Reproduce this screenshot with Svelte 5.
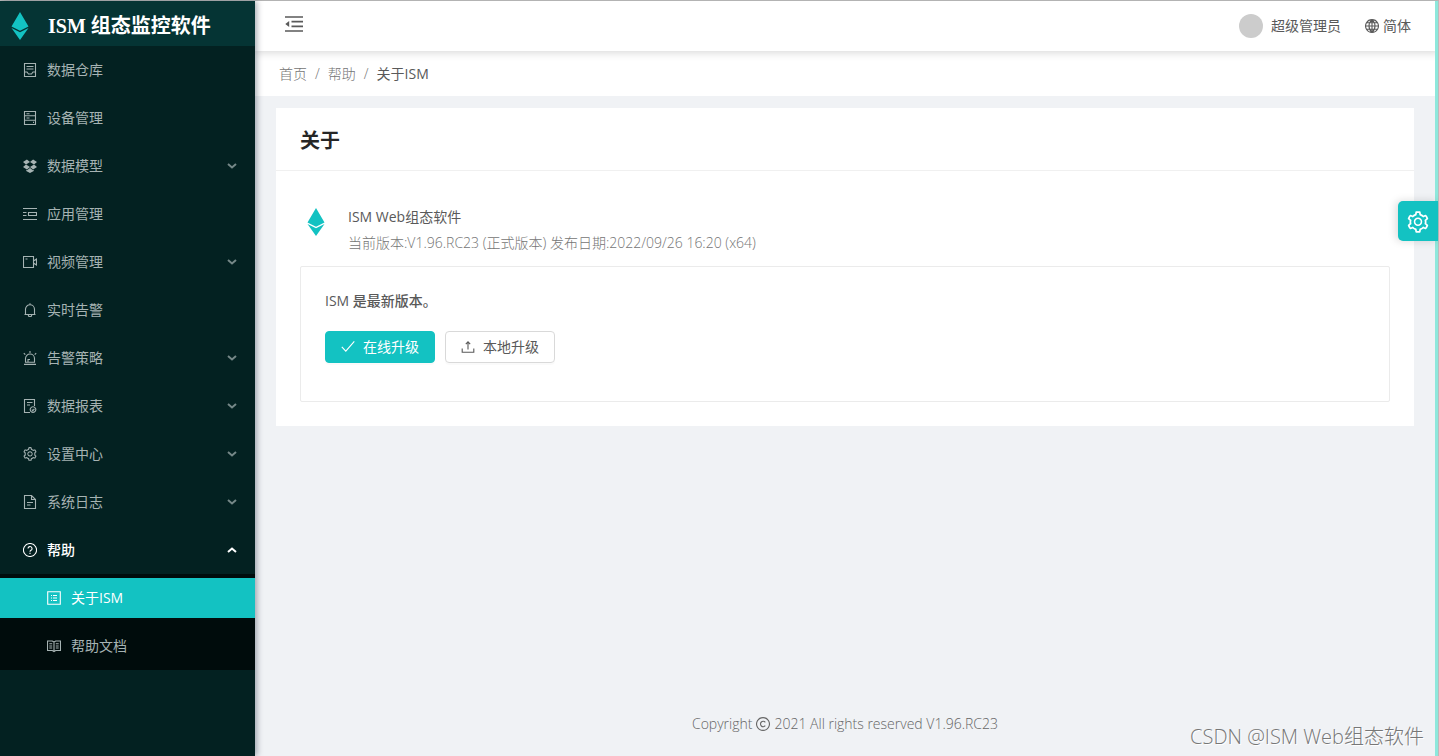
<script lang="ts">
  const gear =
    'M924.8 625.7l-65.5-56c3.1-19 4.7-38.4 4.7-57.8s-1.6-38.8-4.7-57.8l65.5-56a32.03 32.03 0 0 0 9.3-35.2l-.9-2.6a443.74 443.74 0 0 0-79.7-137.9l-1.8-2.1a32.12 32.12 0 0 0-35.1-9.5l-81.3 28.9c-30-24.6-63.5-44-99.7-57.6l-15.7-85a32.05 32.05 0 0 0-25.8-25.7l-2.7-.5c-52.1-9.4-106.9-9.4-159 0l-2.7.5a32.05 32.05 0 0 0-25.8 25.7l-15.8 85.4a351.86 351.86 0 0 0-99 57.4l-81.9-29.1a32 32 0 0 0-35.1 9.5l-1.8 2.1a446.02 446.02 0 0 0-79.7 137.9l-.9 2.6c-4.5 12.5-.8 26.5 9.3 35.2l66.3 56.6c-3.1 18.8-4.6 38-4.6 57.1 0 19.2 1.5 38.4 4.6 57.1L99 625.5a32.03 32.03 0 0 0-9.3 35.2l.9 2.6c18.1 50.4 44.9 96.9 79.7 137.9l1.8 2.1a32.12 32.12 0 0 0 35.1 9.5l81.9-29.1c29.8 24.5 63.1 43.9 99 57.4l15.8 85.4a32.05 32.05 0 0 0 25.8 25.7l2.7.5a449.4 449.4 0 0 0 159 0l2.7-.5a32.05 32.05 0 0 0 25.8-25.7l15.7-85a350 350 0 0 0 99.7-57.6l81.3 28.9a32 32 0 0 0 35.1-9.5l1.8-2.1c34.8-41.1 61.6-87.5 79.7-137.9l.9-2.6c4.5-12.3.8-26.3-9.3-35zM788.3 465.9c2.5 15.1 3.8 30.6 3.8 46.1s-1.3 31-3.8 46.1l-6.6 40.1 74.7 63.9a370.03 370.03 0 0 1-42.6 73.6L721 702.8l-31.4 25.8c-23.9 19.6-50.5 35-79.3 45.8l-38.1 14.3-17.9 97a377.5 377.5 0 0 1-85 0l-17.9-97.2-37.8-14.5c-28.5-10.8-55-26.2-78.7-45.7l-31.4-25.9-93.4 33.2c-17-22.9-31.2-47.6-42.6-73.6l75.5-64.5-6.5-40c-2.4-14.9-3.7-30.3-3.7-45.5 0-15.3 1.2-30.6 3.7-45.5l6.5-40-75.5-64.5c11.3-26.1 25.6-50.7 42.6-73.6l93.4 33.2 31.4-25.9c23.7-19.5 50.2-34.9 78.7-45.7l37.9-14.3 17.9-97.2c28.1-3.2 56.8-3.2 85 0l17.9 97 38.1 14.3c28.7 10.8 55.4 26.2 79.3 45.8l31.4 25.8 92.8-32.9c17 22.9 31.2 47.6 42.6 73.6L781.8 426l6.5 39.9zM512 326c-97.2 0-176 78.8-176 176s78.8 176 176 176 176-78.8 176-176-78.8-176-176-176zm79.2 255.2A111.6 111.6 0 0 1 512 614c-29.9 0-58-11.7-79.2-32.8A111.6 111.6 0 0 1 400 502c0-29.9 11.7-58 32.8-79.2C454 401.6 482.1 390 512 390c29.9 0 58 11.6 79.2 32.8A111.6 111.6 0 0 1 624 502c0 29.9-11.7 58-32.8 79.2z';

  // Stroke icons are drawn on a 14 x 14 grid.
  const strokes: Record<string, string> = {
    warehouse: 'M1.5.5h11v13h-11zM3.5 3.5h7M3.5 6h7M1.5 9h2.5l1.5 2h3L10 9h2.500',
    server: 'M1.5.5h11v13h-11zM1.500 4.800h11M1.500 9.200h11M3.500 2.700h3M3.500 7h3M10 11.400h1',
    app: 'M0 1.500h14M0 12.500h14M0 5.500h3.500M0 8.500h3.500M5.500 5.500h8v3h-8z',
    video: 'M.5 1.500h10v11H.5zM10.500 6l3-2v6l-3-2M2.500 4h2',
    bell: 'M1.500 11.500h11M2.500 11.500V6.300a4.500 4.500 0 0 1 9 0v5.200M7 .3v1.500M5.300 12a1.700 1.700 0 0 0 3.400 0',
    alert: 'M1 13.400h12M2.500 11.200V7.500a4.500 4.500 0 0 1 9 0v3.700zM5 11V8.500h2M7 0v2M.8 2.200l1.500 1.500M13.200 2.200l-1.500 1.500',
    report: 'M7 13.500H1.500V.5h10v6.500M4 3.500h5.500M4 6h3M10 7.800a2.800 2.800 0 1 0 .01 0M8.800 10.700l1 .9 1.600-1.800',
    file: 'M1.500.5h7l4 4v9h-11zM8.500.5v4h4M4 7.500h6M4 10h3.500',
    help: 'M7 .5a6.500 6.500 0 1 0 .01 0M5 5.600a2 2 0 1 1 3 1.700c-.7.400-1 .7-1 1.500M7 9.800v1.100',
    about: 'M.7.7h12.600v12.600H.7zM4 4.500h1M6 4.500h4M4 7h1M6 7h4M4 9.500h1M6 9.500h4',
    book: 'M.5 2h4.800L7 3l1.700-1h4.800v9.500H8.700l-1.700 1-1.700-1H.5zM7 3v9.500M2.300 4.700h2.900M2.300 7h2.900M8.800 4.700h2.900M8.800 7h2.900M2.300 9h2.900M8.800 9h2.900',
    check: 'M.8 6.800l4 4.400L13.300 1.300',
    upload: 'M1.200 8.500v3.700h11.600V8.500M7 9.500V2M4.800 4.200L7 1.800l2.200 2.400',
    globe: 'M7 .6a6.400 6.400 0 1 0 .01 0M7 .6c-4 3.200-4 9.600 0 12.800M7 .6c4 3.200 4 9.600 0 12.800M7 .6v12.800M.6 7h12.800M1.700 3.700h10.600M1.700 10.300h10.600',
    copyright: 'M7 .6a6.400 6.400 0 1 0 .01 0M9.300 5.300a2.700 2.700 0 1 0 0 3.400'
  };

  let helpOpen = $state(true);

  const menu = [
    { label: '数据仓库', icon: 'warehouse', sub: false },
    { label: '设备管理', icon: 'server', sub: false },
    { label: '数据模型', icon: 'dropbox', sub: true },
    { label: '应用管理', icon: 'app', sub: false },
    { label: '视频管理', icon: 'video', sub: true },
    { label: '实时告警', icon: 'bell', sub: false },
    { label: '告警策略', icon: 'alert', sub: true },
    { label: '数据报表', icon: 'report', sub: true },
    { label: '设置中心', icon: 'gear', sub: true },
    { label: '系统日志', icon: 'file', sub: true }
  ];
</script>

{#snippet icon(name: string)}
  {#if name === 'gear'}
    <svg class="icon" viewBox="64 56 896 912" aria-hidden="true"><path fill="currentColor" d={gear} /></svg>
  {:else if name === 'dropbox'}
    <svg class="icon" viewBox="0 0 14 14" aria-hidden="true">
      <path fill="currentColor" d="M3.900.4L7 2.900 3 5.500 0 3zM10.100.4L7 2.900l4 2.600L14 3zM0 8l3-2.500L7 8 3.900 10.500zM14 8l-3-2.500L7 8l3.100 2.500zM3.200 10.900l.8.400 3-2.300 3 2.300.8-.4v1L7 14l-3.800-2.100z" />
    </svg>
  {:else}
    <svg class="icon" viewBox="0 0 14 14" aria-hidden="true"><path class="line" d={strokes[name]} /></svg>
  {/if}
{/snippet}

{#snippet diamond()}
  <svg class="diamond" viewBox="0 0 18 28" aria-hidden="true">
    <path fill="#13c2c2" d="M9 0l8.500 14.500L9 18.700.5 14.500zM.5 16L9 20.200l8.500-4.200L9 28z" />
  </svg>
{/snippet}

{#snippet chevron(up: boolean)}
  <svg class="chevron" viewBox="0 0 10 6" aria-hidden="true"><path d={up ? 'M1 5l4-3.500L9 5' : 'M1 1l4 3.500L9 1'} /></svg>
{/snippet}

<div class="app">
  <aside>
    <a class="brand" href="#home">{@render diamond()}<h1>ISM 组态监控软件</h1></a>
    <nav>
      {#each menu as item}
        <button class="item">
          {@render icon(item.icon)}<span>{item.label}</span>
          {#if item.sub}{@render chevron(false)}{/if}
        </button>
      {/each}
      <button class="item open" aria-expanded={helpOpen} onclick={() => (helpOpen = !helpOpen)}>
        {@render icon('help')}<span>帮助</span>{@render chevron(helpOpen)}
      </button>
      {#if helpOpen}
        <div class="submenu">
          <a class="active" href="#about">{@render icon('about')}<span>关于ISM</span></a>
          <a href="#docs">{@render icon('book')}<span>帮助文档</span></a>
        </div>
      {/if}
    </nav>
  </aside>

  <div class="page">
    <header>
      <button class="fold" aria-label="收起菜单">
        <svg viewBox="0 0 18 16" aria-hidden="true">
          <path d="M0 1h18M6.500 5.700h11.500M6.500 10.300h11.500M0 15h18" stroke="currentColor" stroke-width="1.700" fill="none" />
          <path d="M4.200 5v6L.3 8z" fill="currentColor" />
        </svg>
      </button>
      <div class="tools">
        <button class="user"><span class="avatar"></span>超级管理员</button>
        <button class="lang">{@render icon('globe')}简体</button>
      </div>
    </header>

    <nav class="crumbs" aria-label="breadcrumb">
      <a href="#home">首页</a><span>/</span><a href="#help">帮助</a><span>/</span><strong>关于ISM</strong>
    </nav>

    <main>
      <section class="card">
        <h2>关于</h2>
        <div class="body">
          <div class="meta">
            {@render diamond()}
            <div>
              <h3>ISM Web组态软件</h3>
              <p>当前版本:V1.96.RC23 (正式版本) 发布日期:2022/09/26 16:20 (x64)</p>
            </div>
          </div>
          <div class="panel">
            <h3>ISM 是最新版本。</h3>
            <div class="actions">
              <button class="btn primary">{@render icon('check')}在线升级</button>
              <button class="btn">{@render icon('upload')}本地升级</button>
            </div>
          </div>
        </div>
      </section>
    </main>

    <footer>Copyright {@render icon('copyright')} 2021 All rights reserved V1.96.RC23</footer>
  </div>

  <div class="edge"></div>
  <button class="settings" aria-label="设置">{@render icon('gear')}</button>
  <div class="watermark">CSDN @ISM Web组态软件</div>
</div>

<style>
  :global(body) {
    margin: 0;
  }
  .app {
    display: flex;
    box-sizing: border-box;
    min-height: 100vh;
    border-top: 1px solid #bbb;
    background: #f0f2f5;
    color: #595959;
    font: 14px/22px 'Open Sans', 'Noto Sans CJK SC', sans-serif;
    position: relative;
  }
  h1, h2, h3, p {
    margin: 0;
  }
  a {
    color: inherit;
    text-decoration: none;
  }
  button {
    font: inherit;
    color: inherit;
    border: 0;
    padding: 0;
    background: none;
    cursor: pointer;
  }
  .icon {
    width: 14px;
    height: 14px;
    flex: none;
  }
  .line {
    fill: none;
    stroke: currentColor;
    stroke-width: 1.1;
  }
  .diamond {
    width: 18px;
    height: 28px;
    flex: none;
  }

  aside {
    flex: 0 0 255px;
    background: #032121;
    box-shadow: 2px 0 6px rgba(0, 21, 41, 0.35);
    z-index: 2;
  }
  .brand {
    display: flex;
    align-items: center;
    gap: 19px;
    box-sizing: border-box;
    height: 45px;
    padding: 4px 11px 0;
    background: #053434;
  }
  .brand h1 {
    color: #fff;
    font: bold 20px/32px 'Liberation Serif', 'Noto Sans CJK SC', serif;
    white-space: nowrap;
  }
  .item {
    display: flex;
    align-items: center;
    gap: 10px;
    width: 100%;
    height: 48px;
    padding: 0 18px 0 23px;
    color: #a6b3b3;
    text-align: left;
  }
  .item span {
    flex: 1;
  }
  .item.open {
    color: #fff;
    font-weight: 500;
  }
  .chevron {
    width: 10px;
    height: 6px;
    fill: none;
    stroke: currentColor;
    stroke-width: 2;
    opacity: 0.7;
  }
  .open .chevron {
    opacity: 1;
  }
  .submenu {
    display: flex;
    flex-direction: column;
    gap: 8px;
    padding: 4px 0;
    background: #000c0c;
  }
  .submenu a {
    display: flex;
    align-items: center;
    gap: 10px;
    height: 40px;
    padding-left: 47px;
    color: #a6b3b3;
  }
  .submenu .active {
    background: #13c2c2;
    color: #fff;
  }

  .page {
    flex: 1;
    min-width: 0;
    display: flex;
    flex-direction: column;
  }
  header {
    display: flex;
    align-items: center;
    justify-content: space-between;
    height: 50px;
    padding: 0 28px 0 30px;
    background: #fff;
    box-shadow: 0 2px 8px rgba(0, 0, 0, 0.15);
    z-index: 1;
  }
  .fold svg {
    display: block;
    width: 18px;
    height: 16px;
    margin-bottom: 4px;
  }
  .tools, .user, .lang {
    display: flex;
    align-items: center;
  }
  .tools {
    gap: 24px;
  }
  .user {
    gap: 8px;
  }
  .lang {
    gap: 4px;
  }
  .avatar {
    width: 24px;
    height: 24px;
    border-radius: 50%;
    background: #ccc;
  }
  .crumbs {
    display: flex;
    gap: 8px;
    height: 22px;
    padding: 12px 24px 11px;
    background: #fff;
    color: #757575;
  }
  .crumbs strong {
    font-weight: 400;
    color: #595959;
  }
  .crumbs, .meta p, footer {
    font-weight: 300;
  }
  main {
    flex: 1;
    padding: 12px 25px 12px 21px;
  }
  .card {
    background: #fff;
  }
  .card h2 {
    padding: 17px 24px 13px;
    border-bottom: 1px solid #f0f0f0;
    color: #262626;
    font-size: 20px;
    font-weight: 700;
    line-height: 32px;
  }
  .body {
    padding: 24px;
  }
  .meta {
    display: flex;
    gap: 23px;
    padding: 11px 0 12px 7px;
  }
  .meta .diamond {
    margin-top: 2px;
  }
  .meta p {
    margin-top: 4px;
    color: #757575;
  }
  h3 {
    font-size: 14px;
    font-weight: 400;
    line-height: 22px;
  }
  .panel {
    padding: 23px 24px 38px;
    border: 1px solid #ebebeb;
    border-radius: 2px;
  }
  .panel h3 {
    font-weight: 500;
  }
  .actions {
    display: flex;
    gap: 10px;
    margin-top: 19px;
  }
  .btn {
    display: flex;
    align-items: center;
    gap: 8px;
    height: 32px;
    padding: 0 15px;
    border: 1px solid #d9d9d9;
    border-radius: 4px;
    box-shadow: 0 2px 0 rgba(0, 0, 0, 0.02);
  }
  .btn.primary {
    border-color: #13c2c2;
    background: #13c2c2;
    color: #fff;
  }
  footer {
    display: flex;
    align-items: center;
    justify-content: center;
    gap: 4px;
    padding: 0 4px 21px 0;
    color: #666;
  }
  .edge {
    position: absolute;
    inset: 0 0 0 auto;
    width: 3px;
    border-right: 1px solid #bbb;
    background: #8ee8dc;
    z-index: 3;
  }
  .settings {
    position: absolute;
    top: 200px;
    right: 1px;
    display: grid;
    place-items: center;
    width: 40px;
    height: 40px;
    padding-top: 2px;
    border-radius: 5px 0 0 5px;
    background: #13c2c2;
    color: #fff;
    box-shadow: -2px 0 8px rgba(0, 0, 0, 0.15);
    z-index: 4;
  }
  .settings .icon {
    width: 22px;
    height: 22px;
  }
  .watermark {
    position: absolute;
    right: 15px;
    bottom: 4px;
    color: #777;
    font: 300 20px/30px 'Open Sans', 'Noto Sans CJK SC', sans-serif;
    text-shadow: 1px 1px 0 #fff;
  }
</style>
